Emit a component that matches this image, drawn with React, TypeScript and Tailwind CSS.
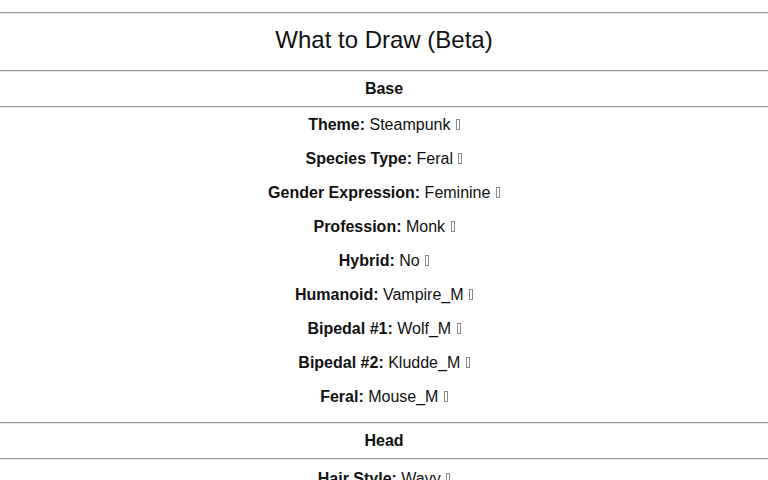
const rows: [string, string][] = [
  ['Theme', 'Steampunk'],
  ['Species Type', 'Feral'],
  ['Gender Expression', 'Feminine'],
  ['Profession', 'Monk'],
  ['Hybrid', 'No'],
  ['Humanoid', 'Vampire_M'],
  ['Bipedal #1', 'Wolf_M'],
  ['Bipedal #2', 'Kludde_M'],
  ['Feral', 'Mouse_M'],
];

const headRows: [string, string][] = [
  ['Hair Style', 'Wavy'],
  ['Eye Color', 'Amber'],
];

function Rule() {
  return <div className="h-0 border-t border-b border-t-[#9a9a9a] border-b-[#e6e6e6]" />;
}

// the reroll glyph shows as a missing-glyph box in the reference
function Tofu() {
  return <span className="inline-block w-[4px] h-[11px] ml-[1px] border border-[#8a8a8a]" />;
}

function Row({ label, value }: { label: string; value: string }) {
  return (
    <div className="h-[34px] flex items-center justify-center text-[16px] text-[#111]">
      <span>
        <span className="font-bold">{label}:</span> {value} <Tofu />
      </span>
    </div>
  );
}

export default function App() {
  return (
    <div className="min-h-screen bg-white pt-[12px]" style={{ fontFamily: '"Liberation Sans", Arial, sans-serif' }}>
      <Rule />
      <div className="h-[56px] pb-[4px] flex items-center justify-center text-[24px] text-[#111]">What to Draw (Beta)</div>
      <Rule />
      <div className="h-[34px] flex items-center justify-center font-bold text-[16px] text-[#111]">Base</div>
      <Rule />
      <div className="pb-[8px]">
        {rows.map(([l, v]) => (
          <Row key={l} label={l} value={v} />
        ))}
      </div>
      <Rule />
      <div className="h-[34px] flex items-center justify-center font-bold text-[16px] text-[#111]">Head</div>
      <Rule />
      <div className="pt-[2px]">
        {headRows.map(([l, v]) => (
          <Row key={l} label={l} value={v} />
        ))}
      </div>
    </div>
  );
}
